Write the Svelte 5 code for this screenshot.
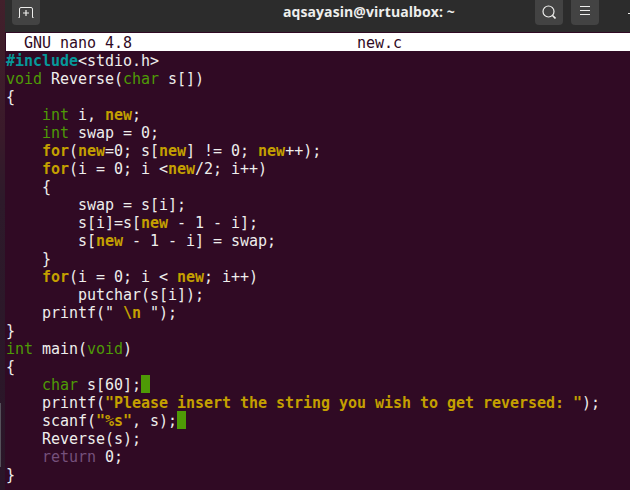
<script>
	// each line is a list of [class, text] pairs
	const k = (t) => ['key', t];
	const n = (t) => ['new', t];
	const p = (t) => ['', t];

	const lines = [
		[['inc', '#include'], p('<stdio.h>')],
		[k('void'), p(' Reverse('), k('char'), p(' s[])')],
		[p('{')],
		[p('    '), k('int'), p(' i, '), n('new'), p(';')],
		[p('    '), k('int'), p(' swap = 0;')],
		[p('    '), n('for'), p('('), n('new'), p('=0; s['), n('new'), p('] != 0; '), n('new'), p('++);')],
		[p('    '), n('for'), p('(i = 0; i <'), n('new'), p('/2; i++)')],
		[p('    {')],
		[p('        swap = s[i];')],
		[p('        s[i]=s['), n('new'), p(' - 1 - i];')],
		[p('        s['), n('new'), p(' - 1 - i] = swap;')],
		[p('    }')],
		[p('    '), n('for'), p('(i = 0; i < '), n('new'), p('; i++)')],
		[p('        putchar(s[i]);')],
		[p('    printf(" '), n('\\n'), p(' ");')],
		[p('}')],
		[k('int'), p(' main('), k('void'), p(')')],
		[p('{')],
		[p('    '), k('char'), p(' s[60];'), ['cursor', ' ']],
		[p('    printf('), n('"Please insert the string you wish to get reversed: "'), p(');')],
		[p('    scanf('), n('"%s"'), p(', s);'), ['cursor', ' ']],
		[p('    Reverse(s);')],
		[p('    '), ['ret', 'return'], p(' 0;')],
		[p('}')]
	];
</script>

<div class="desktop">
	<div class="edge"></div>
	<div class="window">
		<header class="titlebar">
			<button class="btn tab" aria-label="New tab">
				<svg width="16" height="11" viewBox="0 0 16 11" fill="none" stroke="#eeeeec" stroke-width="1">
					<path d="M0.5 10.5 H1.5 V2 Q1.5 0.5 3 0.5 H13 Q14.5 0.5 14.5 2 V10.5 H15.5" />
					<path d="M8 3 V9 M5 6 H11" stroke-width="1.2" />
				</svg>
			</button>
			<div class="title">aqsayasin@virtualbox: ~</div>
			<div class="actions">
				<button class="btn search" aria-label="Search">
					<svg width="14" height="14" viewBox="0 0 14 14" fill="none" stroke="#eeeeec" stroke-width="1.2">
						<circle cx="6.5" cy="6.5" r="5.5" />
						<path d="M10.5 10.5 L13.5 13.5" stroke-width="1.6" />
					</svg>
				</button>
				<button class="btn menu" aria-label="Menu">
					<svg width="12" height="10" viewBox="0 0 12 10" stroke="#eeeeec" stroke-width="1">
						<path d="M1 1.5 H11 M1 5.5 H11 M1 9.5 H11" />
					</svg>
				</button>
				<span class="min"></span>
			</div>
		</header>
		<div class="terminal">
			<pre class="nano-bar">  GNU nano 4.8                         new.c</pre>
			<pre class="code">{#each lines as line}<div class="line">{#each line as [cls, text]}<span class={cls}>{text}</span>{/each}</div>{/each}</pre>
		</div>
	</div>
</div>

<style>
	:global(body) {
		background: #300a24;
		overflow: hidden;
	}

	.desktop {
		display: flex;
		width: 630px;
		height: 490px;
		overflow: hidden;
	}

	.edge {
		width: 5px;
		flex: none;
		background:
			linear-gradient(transparent 403px, #55505a 403px, #55505a 467px, transparent 467px) 0 0 / 1px 100% no-repeat,
			linear-gradient(#42202b 0, #3a1a2a 130px, #2d1a2a 200px, #2a1528 490px);
	}

	.window {
		flex: 1;
		min-width: 0;
		display: flex;
		flex-direction: column;
	}

	.titlebar {
		height: 32px;
		flex: none;
		display: flex;
		background: #2c2c2c;
		padding-left: 7px;
	}

	.btn {
		width: 28px;
		height: 25px;
		padding: 0;
		border: none;
		border-radius: 0 0 4px 4px;
		background: #434343;
		display: flex;
		align-items: center;
		justify-content: center;
	}

	.tab svg {
		margin-top: -1px;
	}

	.search svg {
		margin-top: -2px;
	}

	.menu svg {
		margin-top: -5px;
	}

	.title {
		margin-left: 243px;
		font: bold 14px/24px "Open Sans", sans-serif;
		letter-spacing: 0.08px;
		color: #eeeeec;
		white-space: nowrap;
	}

	.actions {
		margin-left: auto;
		display: flex;
		gap: 8px;
	}

	.min {
		width: 2px;
		height: 1px;
		margin: 13px 0 0 21px;
		background: #eeeeec;
	}

	.terminal {
		flex: 1;
		background: #300a24;
		padding-top: 1px;
		font: 15px/20px "DejaVu Sans Mono", monospace;
		letter-spacing: -0.03px;
		color: #eeeeec;
	}

	pre {
		margin: 0;
		font: inherit;
	}

	.nano-bar {
		height: 18px;
		margin-left: 1px;
		background: #ffffff;
		color: #300a24;
	}

	.code {
		padding-left: 1px;
	}

	.line {
		height: 18px;
	}

	.key {
		color: #4e9a06;
	}

	.new {
		color: #c4a000;
		font-weight: bold;
	}

	.inc {
		color: #06989a;
		font-weight: bold;
	}

	.ret {
		color: #75507b;
	}

	.cursor {
		display: inline-block;
		width: 9px;
		height: 18px;
		vertical-align: top;
		background: #4e9a06;
	}
</style>
